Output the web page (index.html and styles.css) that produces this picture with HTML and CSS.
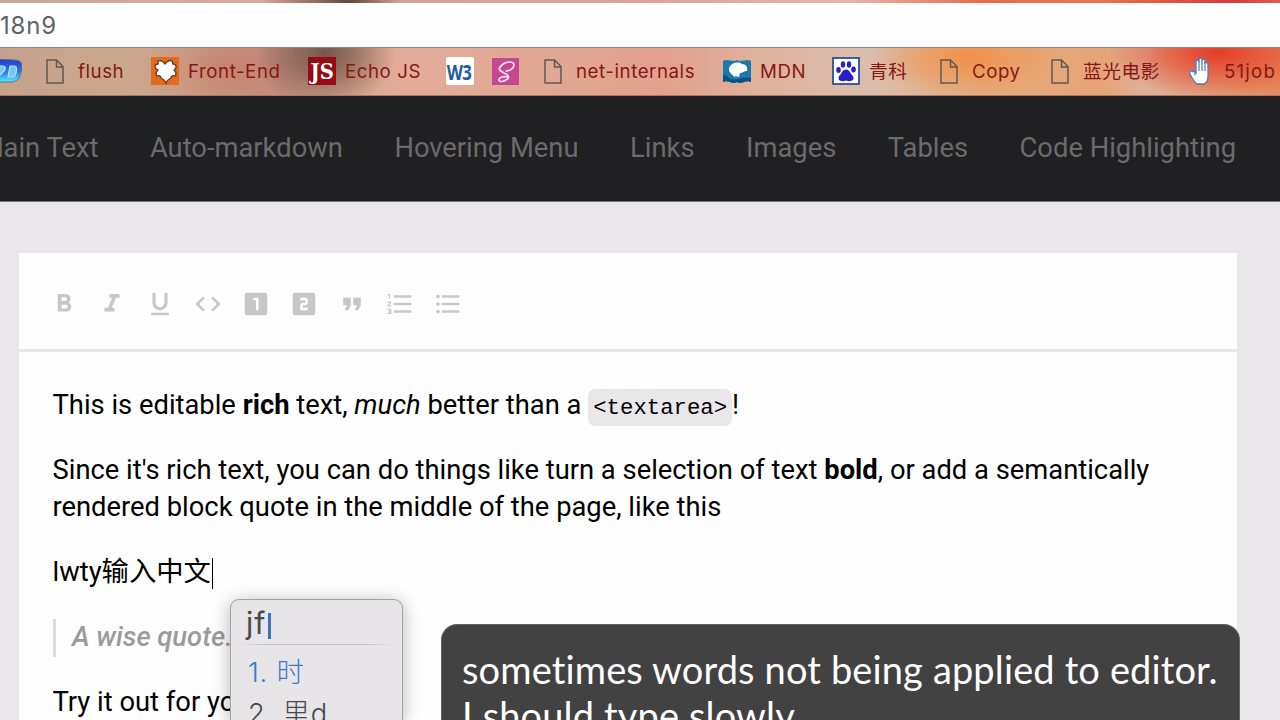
FILE: index.html
```html
<!DOCTYPE html>
<html lang="en">
<head>
  <meta charset="UTF-8" />
  <meta name="viewport" content="width=device-width, initial-scale=1.0"/>
  <title>Rich Text Editor</title>
  <link rel="stylesheet" href="styles.css">
</head>
<body>
  <svg class="defs">
    <symbol id="page" viewBox="0 0 18 25">
      <path d="M1 1h9.500L17 7.500V24H1zM10.500 1v7H17" fill="none" stroke="#625850" stroke-width="1.500"/>
    </symbol>
  </svg>

  <div class="browser">
    <div class="address">18n9</div>
    <div class="bookmarks">
      <a class="bookmark">
        <svg class="icon-video" width="40" height="26" viewBox="0 0 40 26">
          <defs><linearGradient id="video" x2="0" y2="1"><stop stop-color="#223ccb"/><stop offset=".55" stop-color="#2c77e0"/><stop offset="1" stop-color="#55eafa"/></linearGradient></defs>
          <path d="M12 1l20 1c8 0 9 4 7 12-1 7-4 10-11 10H12z" fill="url(#video)" stroke="#536da0"/>
          <path d="M28 8h4c3 0 3 3 2 7-.5 3-2 4-4 4h-4zM15 8h6c3 0 3 4 0 6l-5 5" fill="#73c8fa" stroke="#b9def5" stroke-width="1.200"/>
        </svg>
      </a>
      <a class="bookmark"><svg class="page"><use href="#page"/></svg>flush</a>
      <a class="bookmark">
        <svg width="28" height="28" viewBox="0 0 28 28">
          <rect width="28" height="28" fill="#e36b1d"/>
          <path d="M14 7c2-3 5-4 7-3l1 3c4 0 4 4 1 6 2 2 3 4 1 6-2-1-4 0-4 2-2 1-4 2-5 5-1-3-3-4-5-5 0-2-2-3-4-2-2-2-1-4 1-6-4-2-4-6 0-6V4c3-1 5 0 7 3z" fill="#fff" stroke="#713719" stroke-width="1.300"/>
        </svg>Front-End</a>
      <a class="bookmark"><span class="js"><span>JS</span></span>Echo JS</a>
      <a class="bookmark"><span class="w3"><span>W3</span></span></a>
      <a class="bookmark">
        <svg width="27" height="27" viewBox="0 0 27 27">
          <rect width="27" height="27" fill="#c4488f"/>
          <path d="M14 13c4 0 8-3 8-6 0-4-8-4-12 0-5 4-2 6 2 8 5 2 6 5 2 7-3 2-7 2-7 0 0-3 5-4 8-3" fill="none" stroke="#fbdcee" stroke-width="1.700" stroke-linecap="round"/>
        </svg>
      </a>
      <a class="bookmark"><svg class="page"><use href="#page"/></svg>net-internals</a>
      <a class="bookmark">
        <svg width="28" height="26" viewBox="0 0 28 26">
          <path d="M0 3c5-3 9 2 14-1 5 3 9-2 14 1v21c-5-3-9 3-14 0-5 3-9-3-14 0z" fill="#1a78ad"/>
          <path d="M0 17c3 0 5 2 7 4 7 2 14-3 21-1v4c-5-3-9 3-14 0-5 3-9-3-14 0z" fill="#0a5281"/>
          <path d="M6 10c2-5 9-7 13-4 4 0 6 3 5 7-3 0-4 2-7 2l-1 4c-3-1-4-1-5 0-1-3-6-4-5-9z" fill="#fff"/>
        </svg>MDN</a>
      <a class="bookmark">
        <svg width="28" height="28" viewBox="0 0 28 28">
          <rect x="1" y="1" width="26" height="26" fill="#fff" stroke="#294fa7" stroke-width="1.800"/>
          <g fill="#291fc9"><ellipse cx="6.500" cy="13" rx="2.300" ry="3"/><ellipse cx="11" cy="7.500" rx="2.200" ry="3.200"/><ellipse cx="17" cy="7.500" rx="2.200" ry="3.200"/><ellipse cx="21.500" cy="12.500" rx="2.300" ry="3"/><path d="M14 12.500c4 0 4 4 7 6.500 2 5-3 6-7 4.500-4 1.500-9 .5-7-4.500 3-2 3-6.500 7-6.500z"/></g>
        </svg>青科</a>
      <a class="bookmark"><svg class="page"><use href="#page"/></svg>Copy</a>
      <a class="bookmark"><svg class="page"><use href="#page"/></svg>蓝光电影</a>
      <a class="bookmark job">
        <svg width="22" height="28" viewBox="0 0 22 28">
          <path d="M7 14V4q1.500-2 3 0V2q1.500-2 3 0v1q2-2 3 0v3q2-1 3 1v12c0 4-2 7-4 8H8c-3-2-5-6-7-10-1-4 3-4 6-1z" fill="#fff" stroke="#5379b0" stroke-width="1.300"/>
          <path d="M10 4v10M13 3v11M16 5v9M3 15c3-2 5 1 2 3" fill="none" stroke="#5379b0" stroke-width="1.200"/>
        </svg>51job</a>
    </div>
  </div>

  <nav>
    <a>Plain Text</a>
    <a>Auto-markdown</a>
    <a>Hovering Menu</a>
    <a>Links</a>
    <a>Images</a>
    <a>Tables</a>
    <a>Code Highlighting</a>
  </nav>

  <main class="editor">
    <div class="toolbar">
      <svg viewBox="0 0 24 24"><path d="M15.600 10.790c.97-.67 1.650-1.770 1.650-2.790 0-2.260-1.750-4-4-4H7v14h7.040c2.090 0 3.710-1.700 3.710-3.790 0-1.520-.86-2.820-2.150-3.420zM10 6.500h3c.83 0 1.500.67 1.500 1.500s-.67 1.500-1.500 1.500h-3v-3zm3.500 9H10v-3h3.500c.83 0 1.500.67 1.500 1.500s-.67 1.500-1.500 1.500z"/></svg>
      <svg viewBox="0 0 24 24"><path d="M10 4v3h2.210l-3.420 8H6v3h8v-3h-2.210l3.420-8H18V4z"/></svg>
      <svg viewBox="0 0 24 24"><path d="M12 17c3.310 0 6-2.690 6-6V3h-2.500v8c0 1.930-1.570 3.500-3.500 3.500S8.500 12.930 8.500 11V3H6v8c0 3.310 2.690 6 6 6zm-7 2v2h14v-2H5z"/></svg>
      <svg viewBox="0 0 24 24"><path d="M9.400 16.600L4.800 12l4.600-4.600L8 6l-6 6 6 6 1.400-1.400zm5.200 0l4.600-4.600-4.600-4.600L16 6l6 6-6 6-1.400-1.400z"/></svg>
      <svg viewBox="0 0 24 24"><path d="M19 3H5c-1.100 0-2 .9-2 2v14c0 1.100.9 2 2 2h14c1.100 0 2-.9 2-2V5c0-1.100-.9-2-2-2zm-5 14h-2V9h-2V7h4v10z"/></svg>
      <svg viewBox="0 0 24 24"><path d="M19 3H5c-1.100 0-2 .9-2 2v14c0 1.100.9 2 2 2h14c1.100 0 2-.9 2-2V5c0-1.100-.9-2-2-2zm-4 8c0 1.110-.9 2-2 2h-2v2h4v2H9v-4c0-1.110.9-2 2-2h2V9H9V7h4c1.100 0 2 .89 2 2v2z"/></svg>
      <svg viewBox="0 0 24 24"><path d="M6 17h3l2-4V7H5v6h3zm8 0h3l2-4V7h-6v6h3z"/></svg>
      <svg viewBox="0 0 24 24"><path d="M2 17h2v.5H3v1h1v.5H2v1h3v-4H2v1zm1-9h1V4H2v1h1v3zm-1 3h1.800L2 13.100v.9h3v-1H3.200L5 10.900V10H2v1zm5-6v2h14V5H7zm0 14h14v-2H7v2zm0-6h14v-2H7v2z"/></svg>
      <svg viewBox="0 0 24 24"><path d="M4 10.500c-.83 0-1.500.67-1.500 1.500s.67 1.500 1.500 1.500 1.500-.67 1.500-1.500-.67-1.500-1.500-1.500zm0-6c-.83 0-1.500.67-1.500 1.500S3.170 7.500 4 7.500 5.500 6.830 5.500 6 4.830 4.500 4 4.500zm0 12c-.83 0-1.500.68-1.500 1.500s.68 1.500 1.500 1.500 1.500-.68 1.500-1.500-.67-1.500-1.500-1.500zM7 19h14v-2H7v2zm0-6h14v-2H7v2zm0-8v2h14V5H7z"/></svg>
    </div>
    <div class="content">
      <p>This is editable <strong>rich</strong> text, <em>much</em> better than a <code>&lt;textarea&gt;</code>!</p>
      <p>Since it's rich text, you can do things like turn a selection of text <strong>bold</strong>, or add a semantically rendered block quote in the middle of the page, like this</p>
      <p>lwty输入中文<span class="caret"></span></p>
      <blockquote>A wise quote.</blockquote>
      <p>Try it out for yo</p>
    </div>
  </main>

  <div class="ime">
    <div class="typed">jf<span></span></div>
    <div class="choice selected">1. 时</div>
    <div class="choice">2. 里d</div>
  </div>

  <div class="caption">
    <div class="line">sometimes words not being applied to editor.</div>
    <div class="line">I should type slowly.</div>
  </div>
</body>
</html>
```
FILE: styles.css
```css
* {
  box-sizing: border-box;
}
html, body {
  margin: 0;
  height: 720px;
  overflow: hidden;
}
body {
  position: relative;
  background: #e9e7ea;
  font-family: Roboto, "Noto Sans CJK SC", sans-serif;
  font-size: 27.35px;
  line-height: 37.6px;
  color: #000;
}
.defs {
  display: none;
}

/* browser chrome */
.browser {
  height: 96px;
  padding-top: 3px;
  background: linear-gradient(90deg, #c9a895 0, #d9a99c 260px, #65463e 350px, #d7a391 400px, #e0a290 650px, #e6b5a5 850px, #e66d50 980px, #e67650 1100px, #d73837 1230px, #e25c4c 1280px);
}
.address {
  height: 44px;
  background: #fefefe;
  color: #606468;
  font-family: Inter, sans-serif;
  font-size: 24px;
  letter-spacing: .8px;
  line-height: 46px;
}
.bookmarks {
  height: 49px;
  padding-top: 1px;
  border-top: 1px solid #8d8482;
  border-bottom: 1px solid #aa7a68;
  display: grid;
  grid-template-columns: 64px 105px 157px 138px 46px 52px 179px 109px 108px 111px 138px 91px;
  margin-left: -18px;
  align-items: center;
  white-space: nowrap;
  background:
    radial-gradient(ellipse 70px 58px at 343px 5px, #75564d 0, rgba(117, 86, 77, .6) 45%, transparent),
    radial-gradient(ellipse 95px 60px at 246px 20px, rgba(195, 119, 102, .7), transparent),
    radial-gradient(ellipse 110px 46px at 1235px 4px, #e53d27 0, rgba(229, 65, 40, .6) 45%, transparent),
    radial-gradient(ellipse 95px 40px at 985px 10px, #f2914a, transparent),
    linear-gradient(90deg, #c5a18a 0, #ceaa90 200px, #c69380 300px, #d9a88d 360px, #e3ac9a 425px, #e0a792 570px, #e2a18e 680px, #dfb29c 780px, #dabdac 890px, #e3ac7e 1000px, #e7a477 1120px, #deb19a 1165px, #e5895b 1298px);
  color: #851814;
  font-family: Inter, "Noto Sans CJK SC", sans-serif;
  font-size: 18.7px;
  letter-spacing: .55px;
}
.bookmark {
  display: flex;
  align-items: center;
  gap: 9px;
  height: 28px;
  line-height: 30px;
}
.bookmark svg {
  flex: none;
  margin-top: -2px;
}
.bookmark .page {
  width: 18px;
  height: 25px;
  margin-right: 5px;
}
.job {
  gap: 13px;
  letter-spacing: 1.2px;
}
.js, .w3 {
  flex: none;
  width: 28px;
  height: 28px;
  margin-top: -2px;
  overflow: hidden;
}
.js {
  background: #970b12;
  color: #fff;
  font: bold 23px/28px "DejaVu Serif", serif;
  letter-spacing: 0;
}
.js span {
  display: block;
  width: 34px;
  padding-left: 3px;
  transform: scaleX(.85);
  transform-origin: 0 0;
}
.w3 {
  background: #fff;
  border-radius: 2px;
  color: #245b9e;
  font: bold 22px/28px "Open Sans", sans-serif;
  letter-spacing: -1px;
}
.w3 span {
  display: block;
  width: 36px;
  padding-left: 1px;
  transform: scaleX(.76);
  transform-origin: 0 0;
}

nav {
  height: 106px;
  padding: 0 44px 0 0;
  background: #202022;
  border-bottom: 1px solid #777679;
  display: flex;
  align-items: center;
  justify-content: flex-end;
  gap: 51.5px;
  color: #6b6a6c;
  white-space: nowrap;
}

/* editor */
.editor {
  width: 1218px;
  height: 467px;
  margin: 51px 0 0 19px;
  background: #fefefe;
}
.toolbar {
  height: 99px;
  padding: 6px 0 0 30px;
  border-bottom: 3px solid #e9e8e9;
  display: flex;
  align-items: center;
  gap: 18px;
}
.toolbar svg {
  width: 30px;
  height: 30px;
  flex: none;
  fill: #c7c6c8;
}
.content {
  padding: 34.7px 34px 0 33.5px;
}
.content p, blockquote {
  margin: 0 0 27.4px;
}
code {
  padding: 6px 5px 5px;
  border-radius: 7px;
  background: #e9e7ea;
  font: 22.3px/1 "Liberation Mono", monospace;
}
.caret {
  display: inline-block;
  width: 1px;
  height: 31px;
  margin: -6px 0 -5px 1px;
  background: #000;
  vertical-align: middle;
}
blockquote {
  border-left: 3px solid #dddcde;
  padding-left: 16.5px;
  color: #9b9b9d;
  font-style: italic;
  font-weight: 500;
}

/* input candidates */
.ime {
  position: absolute;
  left: 230px;
  top: 599px;
  width: 173px;
  height: 121px;
  overflow: hidden;
  border: 1px solid #a3a1a4;
  border-bottom: 0;
  border-radius: 9px 9px 0 0;
  background: #e7e5e8;
  box-shadow: 0 3px 18px rgba(0, 0, 0, .3);
  color: #49484c;
  font-family: Inter, "Noto Sans CJK SC", sans-serif;
  font-weight: 300;
}
.typed {
  height: 45px;
  margin: 0 8px;
  padding-left: 7px;
  border-bottom: 1px solid;
  border-image: linear-gradient(90deg, transparent, #c3c1c4 20%, #c3c1c4 80%, transparent) 1;
  font-size: 30px;
  font-weight: 400;
  letter-spacing: 1px;
  line-height: 46px;
}
.typed span {
  display: inline-block;
  width: 3px;
  height: 26px;
  margin-left: 2px;
  background: #3a72bf;
  vertical-align: -5px;
}
.choice {
  height: 41px;
  padding-left: 17px;
  letter-spacing: .8px;
  line-height: 56px;
}
.selected {
  color: #397bc9;
}

.caption {
  position: absolute;
  left: 441px;
  top: 624px;
  width: 799px;
  height: 96px;
  overflow: hidden;
  padding: 21px 0 0 20px;
  border: 1px solid #626262;
  border-bottom: 0;
  border-radius: 16px 16px 0 0;
  background: #424242;
  color: #fff;
  font-family: Lato, sans-serif;
  font-size: 38px;
  font-variant-ligatures: none;
  letter-spacing: .14px;
  line-height: 46px;
  white-space: nowrap;
}
```
